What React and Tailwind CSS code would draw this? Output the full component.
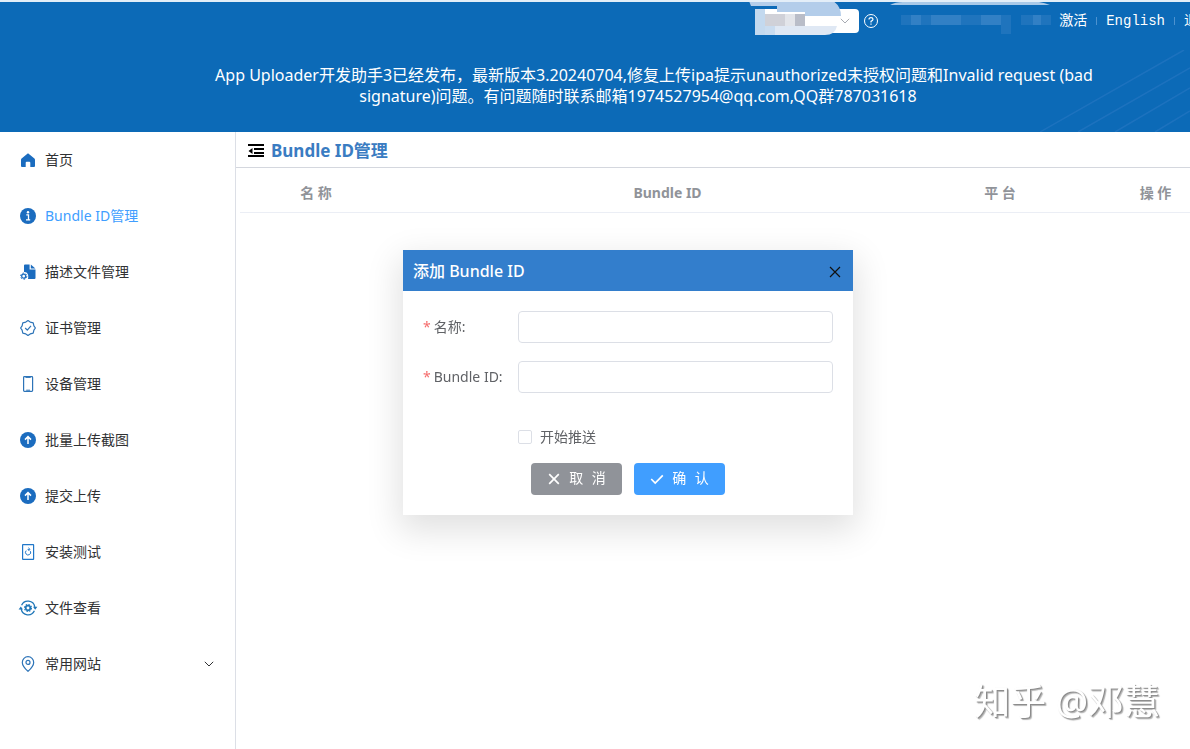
import React, { useState } from 'react';

const HomeIcon = () => (
  <svg viewBox="0 0 16 16" className="w-4 h-4" fill="#1b6cbf">
    <path d="M8 1.3 L14.4 6.6 Q15 7.1 15 8 V14 Q15 15 14 15 H10.3 V10.8 Q10.3 9.8 9.3 9.8 H6.7 Q5.7 9.8 5.7 10.8 V15 H2 Q1 15 1 14 V8 Q1 7.1 1.6 6.6 Z" />
  </svg>
);

const InfoIcon = () => (
  <svg viewBox="0 0 16 16" className="w-4 h-4">
    <circle cx="8" cy="8" r="8" fill="#1b6cbf" />
    <circle cx="8" cy="4.3" r="1.2" fill="#fff" />
    <path d="M6.3 6.9 H8.5 V11.6 M6 11.8 H10.2" stroke="#fff" strokeWidth="1.3" fill="none" />
  </svg>
);

const ProfileIcon = () => (
  <svg viewBox="0 0 16 16" className="w-4 h-4">
    <path d="M5 0.5 H9.6 V5.6 H15.5 V14 Q15.5 15 14.5 15 H8 Q9 11 6.5 8.6 Q5.4 7.8 4 8 V1.5 Q4 0.5 5 0.5 Z" fill="#1b6cbf" />
    <path d="M10.8 0.6 L15.4 4.6 H10.8 Z" fill="#1b6cbf" />
    <circle cx="3.7" cy="12.2" r="2" fill="none" stroke="#1b6cbf" strokeWidth="1.3" />
    <circle cx="3.7" cy="12.2" r="3.1" fill="none" stroke="#1b6cbf" strokeWidth="1" strokeDasharray="1.6 1.65" />
  </svg>
);

const CertIcon = () => (
  <svg viewBox="0 0 16 16" className="w-4 h-4" fill="none" stroke="#2d74b8" strokeWidth="1.2" strokeLinejoin="round">
    <path d="M8 0.6 L10.2 2.1 L13.2 2.8 L13.9 5.8 L15.4 8 L13.9 10.2 L13.2 13.2 L10.2 13.9 L8 15.4 L5.8 13.9 L2.8 13.2 L2.1 10.2 L0.6 8 L2.1 5.8 L2.8 2.8 L5.8 2.1 Z" />
    <path d="M5.2 8 L7.3 10.2 L11 5.8" />
  </svg>
);

const PhoneIcon = () => (
  <svg viewBox="0 0 16 16" className="w-4 h-4" fill="none" stroke="#2d74b8">
    <rect x="3.6" y="0.6" width="9" height="14.8" rx="0.8" strokeWidth="1.2" />
    <path d="M5.5 1.2 H10.7" strokeWidth="1.4" />
    <path d="M6.2 14.2 H10" />
  </svg>
);

const UploadIcon = () => (
  <svg viewBox="0 0 16 16" className="w-4 h-4">
    <circle cx="8" cy="8" r="8" fill="#1b6cbf" />
    <path d="M8 12 V4.8 M5 7.6 L8 4.6 L11 7.6" stroke="#fff" strokeWidth="1.5" fill="none" />
  </svg>
);

const InstallIcon = () => (
  <svg viewBox="0 0 16 16" className="w-4 h-4" fill="none" stroke="#2077c9">
    <rect x="2.6" y="0.6" width="11" height="14.8" rx="0.4" strokeWidth="1.2" />
    <path d="M6.2 6.6 A2.6 2.6 0 1 0 10.4 7.2 M7.6 5.4 H9.4 M8.4 3.8 L10 5.4 L8.4 7" strokeWidth="1" />
  </svg>
);

const FileViewIcon = () => (
  <svg viewBox="0 0 20 16" className="w-5 h-4 -mx-0.5" fill="none" stroke="#2077b8">
    <path d="M3.6 5.2 A7 7 0 0 1 16.8 6.8 M16.4 10.8 A7 7 0 0 1 3.2 9.2" strokeWidth="1.3" />
    <path d="M0.6 9.4 L2.8 6.4 L5 9.4 Z M15 6.8 L17.2 9.8 L19.4 6.8 Z" fill="#2077b8" stroke="none" />
    <circle cx="10" cy="8" r="2.3" strokeWidth="1.7" />
    <circle cx="10" cy="8" r="3.5" strokeWidth="1.1" strokeDasharray="1.5 1.25" />
  </svg>
);

const PinIcon = () => (
  <svg viewBox="0 0 16 16" className="w-4 h-4" fill="none" stroke="#2d74b8" strokeWidth="1.2">
    <path d="M8 15.3 C4.6 12.2 2.3 9.5 2.3 6.4 A5.7 5.7 0 0 1 13.7 6.4 C13.7 9.5 11.4 12.2 8 15.3 Z" />
    <circle cx="8" cy="6.4" r="2" />
  </svg>
);

const ChevronDown = ({ className }) => (
  <svg viewBox="0 0 12 12" className={className} fill="none" stroke="currentColor">
    <path d="M1.8 3.8 L6 8 L10.2 3.8" />
  </svg>
);

const menuItems = [
  { label: '首页', icon: HomeIcon },
  { label: 'Bundle ID管理', icon: InfoIcon },
  { label: '描述文件管理', icon: ProfileIcon },
  { label: '证书管理', icon: CertIcon },
  { label: '设备管理', icon: PhoneIcon },
  { label: '批量上传截图', icon: UploadIcon },
  { label: '提交上传', icon: UploadIcon },
  { label: '安装测试', icon: InstallIcon },
  { label: '文件查看', icon: FileViewIcon },
  { label: '常用网站', icon: PinIcon, children: true }
];

function Header() {
  return (
    <header className="relative h-[132px] overflow-hidden border-t-2 border-[#e3eef8] bg-[#0c6ab7] text-white">
      {/* decorative lines */}
      <svg viewBox="0 0 150 82" className="absolute right-0 bottom-0 w-[150px] h-[82px]" stroke="#1d72be" strokeWidth="1.5">
        <path d="M0 82 L144 0 M38 82 L150 18 M75 82 L150 38 M115 82 L150 61" />
      </svg>

      <div className="relative flex items-center justify-end h-[38px] whitespace-nowrap text-sm font-['Liberation_Mono','Noto_Sans_CJK_SC',monospace]">
        <div className="relative w-[104px] h-6">
          <select aria-label="account" className="block w-full h-6 rounded-sm bg-white appearance-none" />
          <ChevronDown className="absolute right-2 top-1.5 w-3 h-3 text-[#a8abb2]" />
          <svg viewBox="0 0 96 36" className="absolute -left-2 -top-2 w-24 h-9">
            <path d="M2 0 H86 Q94 5 94 15 H58 V11 H30 V5 H4 Z" fill="#b3cdea" />
            <rect x="8" y="8" width="10" height="26" fill="#c3d9ef" />
            <rect x="18" y="13" width="30" height="12" fill="#d0d1d8" />
            <rect x="38" y="13" width="10" height="12" fill="#e3e5ea" />
            <rect x="48" y="13" width="10" height="12" fill="#b9bdc8" />
            <path d="M18 25 H90 Q88 34 78 34 H18 Z" fill="#dfe8f4" />
            <rect x="18" y="25" width="10" height="9" fill="#c9dcf0" />
          </svg>
        </div>
        <svg viewBox="0 0 16 16" className="w-4 h-4 ml-1" fill="none" stroke="#fff">
          <circle cx="8" cy="8" r="6.5" />
          <path d="M6 6.5 Q6 4.6 8 4.6 Q10 4.6 10 6.3 Q10 7.5 8 8.4 V9.4 M8 10.4 V11.8" strokeWidth="1.2" />
        </svg>
        <svg viewBox="0 0 168 38" className="w-[168px] h-[38px] ml-1" fill="#1f74bd">
          <path d="M7 3 Q12 0 20 0 H156 Q162 1 167 3 Z" fill="#a9c9e8" />
          <path d="M18 13 H128 V32 H118 V23 H18 Z M138 13 H168 V23 H138 Z" />
          <path d="M28 13 H38 V23 H28 Z M48 13 H78 V23 H48 Z M98 13 H118 V23 H98 Z M150 13 H158 V23 H150 Z" fill="#3280c5" />
        </svg>
        <a href="#activate" className="ml-2">激活</a>
        <span className="w-px h-2 mx-[9px] bg-[#4d92cf]" />
        <a href="#english">English</a>
        <span className="w-px h-2 mx-[9px] bg-[#4d92cf]" />
        <a href="#logout" className="-mr-[22px]">退出</a>
      </div>

      <div className="relative flex justify-center pt-[25px] pl-[86px]">
        <p className="max-w-[960px] text-center indent-8 text-base leading-[21px]">
          App Uploader开发助手3已经发布，最新版本3.20240704,修复上传ipa提示unauthorized未授权问题和Invalid request (bad signature)问题。有问题随时联系邮箱1974527954@qq.com,QQ群787031618
        </p>
      </div>
    </header>
  );
}

function Sidebar({ active, onSelect }) {
  return (
    <nav className="w-[236px] shrink-0 border-r border-[#dcdfe6]">
      {menuItems.map(({ label, icon: Icon, children }) => (
        <a
          key={label}
          href="#menu"
          onClick={() => onSelect(label)}
          className={`flex items-center gap-[9px] h-14 px-5 text-sm ${active === label ? 'text-[#409eff]' : 'text-[#303133]'}`}
        >
          <Icon />
          <span>{label}</span>
          {children && <ChevronDown className="w-3 h-3 ml-auto" />}
        </a>
      ))}
    </nav>
  );
}

function AddBundleDialog({ onClose }) {
  const [form, setForm] = useState({ name: '', bundleId: '', push: false });

  const handleChange = (e) => {
    const { name, value, type, checked } = e.target;
    setForm(prev => ({ ...prev, [name]: type === 'checkbox' ? checked : value }));
  };

  const handleSubmit = (e) => {
    e.preventDefault();
    onClose();
  };

  return (
    <div className="fixed inset-0 flex items-start justify-center pt-[250px] pl-[66px]">
      <div role="dialog" aria-labelledby="dialog-title" className="w-[450px] bg-white shadow-[0_12px_32px_4px_rgba(0,0,0,0.12)]">
        <div className="flex items-center justify-between h-[41px] px-2.5 bg-[#337ecc]">
          <h2 id="dialog-title" className="text-base font-medium text-white">添加 Bundle ID</h2>
          <button type="button" aria-label="close" onClick={onClose} className="p-0.5 pt-1">
            <svg viewBox="0 0 12 12" className="w-3 h-3" stroke="#111" strokeWidth="1.2">
              <path d="M1 1 L11 11 M11 1 L1 11" />
            </svg>
          </button>
        </div>

        <form onSubmit={handleSubmit} className="p-5 text-sm text-[#606266]">
          <div className="flex items-center mb-[18px]">
            <label htmlFor="name" className="w-[95px]">
              <span className="mr-[3px] text-[#f56c6c]">*</span>名称:
            </label>
            <input
              id="name"
              name="name"
              type="text"
              value={form.name}
              onChange={handleChange}
              className="flex-1 h-8 px-3 border border-[#dcdfe6] rounded"
            />
          </div>
          <div className="flex items-center mb-[34px]">
            <label htmlFor="bundleId" className="w-[95px]">
              <span className="mr-[3px] text-[#f56c6c]">*</span>Bundle ID:
            </label>
            <input
              id="bundleId"
              name="bundleId"
              type="text"
              value={form.bundleId}
              onChange={handleChange}
              className="flex-1 h-8 px-3 border border-[#dcdfe6] rounded"
            />
          </div>
          <label className="flex items-center gap-2 h-5 mb-4 ml-[95px]">
            <input
              name="push"
              type="checkbox"
              checked={form.push}
              onChange={handleChange}
              className="w-3.5 h-3.5 border border-[#dcdfe6] rounded-xs appearance-none checked:bg-[#409eff]"
            />
            开始推送
          </label>
          <div className="flex justify-center gap-3 text-white font-['Liberation_Mono','Noto_Sans_CJK_SC',monospace]">
            <button type="button" onClick={onClose} className="flex items-center justify-center gap-2 w-[91px] h-8 rounded bg-[#909399]">
              <svg viewBox="0 0 14 14" className="w-3.5 h-3.5" stroke="#fff" strokeWidth="1.7">
                <path d="M2.2 2.2 L11.8 11.8 M11.8 2.2 L2.2 11.8" />
              </svg>
              <span>取 消</span>
            </button>
            <button type="submit" className="flex items-center justify-center gap-2 w-[91px] h-8 rounded bg-[#409eff]">
              <svg viewBox="0 0 14 14" className="w-3.5 h-3.5" fill="none" stroke="#fff" strokeWidth="1.7">
                <path d="M1.2 7 L5.2 11 L12.8 3.4" />
              </svg>
              <span>确 认</span>
            </button>
          </div>
        </form>
      </div>
    </div>
  );
}

export default function App() {
  const [active, setActive] = useState('Bundle ID管理');
  const [showDialog, setShowDialog] = useState(true);

  return (
    <div className="flex flex-col min-h-screen bg-white font-['Noto_Sans','Noto_Sans_CJK_SC',sans-serif]">
      <Header />
      <div className="flex flex-1">
        <Sidebar active={active} onSelect={setActive} />
        <main className="flex-1 min-w-0">
          <div className="flex items-center gap-[7px] h-9 px-3 pt-0.5 border-b border-[#d4d7de]">
            <svg viewBox="0 0 16 16" className="w-4 h-4" fill="#000">
              <path d="M0 1 H16 V3 H0 Z M6 5 H16 V7 H6 Z M6 9 H16 V11 H6 Z M0 12 H16 V14 H0 Z M0.5 8 L4.5 5 V11 Z" />
            </svg>
            <h1 className="text-[17px] font-bold text-[#3a7cc2]">{active}</h1>
          </div>
          <div className="pl-1">
            <table className="w-full table-fixed text-sm text-[#909399]">
              <thead>
                <tr className="h-11 border-b border-[#ebeef5]">
                  <th className="w-[16%] pt-1.5">名 称</th>
                  <th className="w-[58%] pt-1.5">Bundle ID</th>
                  <th className="w-[12%] pt-1.5">平 台</th>
                  <th className="pt-1.5 pl-16">操 作</th>
                </tr>
              </thead>
            </table>
          </div>
        </main>
      </div>

      {showDialog && <AddBundleDialog onClose={() => setShowDialog(false)} />}

      <div className="fixed right-[30px] bottom-6 text-[36px] leading-[46px] text-white pointer-events-none [text-shadow:1px_1px_1px_#888,2px_2px_1px_#bbb]">
        知乎 @邓慧
      </div>
    </div>
  );
}
